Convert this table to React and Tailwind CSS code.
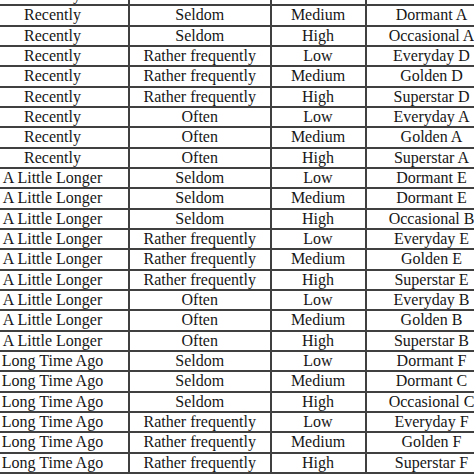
const rows = [
  ["Recently", "Seldom", "Low", "Dormant B"],
  ["Recently", "Seldom", "Medium", "Dormant A"],
  ["Recently", "Seldom", "High", "Occasional A"],
  ["Recently", "Rather frequently", "Low", "Everyday D"],
  ["Recently", "Rather frequently", "Medium", "Golden D"],
  ["Recently", "Rather frequently", "High", "Superstar D"],
  ["Recently", "Often", "Low", "Everyday A"],
  ["Recently", "Often", "Medium", "Golden A"],
  ["Recently", "Often", "High", "Superstar A"],
  ["A Little Longer", "Seldom", "Low", "Dormant E"],
  ["A Little Longer", "Seldom", "Medium", "Dormant E"],
  ["A Little Longer", "Seldom", "High", "Occasional B"],
  ["A Little Longer", "Rather frequently", "Low", "Everyday E"],
  ["A Little Longer", "Rather frequently", "Medium", "Golden E"],
  ["A Little Longer", "Rather frequently", "High", "Superstar E"],
  ["A Little Longer", "Often", "Low", "Everyday B"],
  ["A Little Longer", "Often", "Medium", "Golden B"],
  ["A Little Longer", "Often", "High", "Superstar B"],
  ["Long Time Ago", "Seldom", "Low", "Dormant F"],
  ["Long Time Ago", "Seldom", "Medium", "Dormant C"],
  ["Long Time Ago", "Seldom", "High", "Occasional C"],
  ["Long Time Ago", "Rather frequently", "Low", "Everyday F"],
  ["Long Time Ago", "Rather frequently", "Medium", "Golden F"],
  ["Long Time Ago", "Rather frequently", "High", "Superstar F"],
  ["Long Time Ago", "Often", "Low", "Everyday C"],
];

const App = () => {
  return (
    <div className="h-[474px] w-[474px] overflow-hidden bg-white font-['Liberation_Serif',_'Times_New_Roman',_serif] text-[16px] text-[#161616]">
      <div className="-ml-[23px] -mt-[14px] w-[520px]">
        {rows.map((row, index) => (
          <div
            key={index}
            className="box-border grid h-[20.33px] grid-cols-[153px_141.5px_95px_130px] border-b-2 border-[#404040]"
          >
            {row.map((cell, cellIndex) => (
              <div
                key={cellIndex}
                className={`flex items-center justify-center whitespace-nowrap leading-[18px] ${
                  cellIndex < 3 ? "border-r-2 border-[#404040]" : ""
                }`}
              >
                {cell}
              </div>
            ))}
          </div>
        ))}
      </div>
    </div>
  );
};

export default App;
